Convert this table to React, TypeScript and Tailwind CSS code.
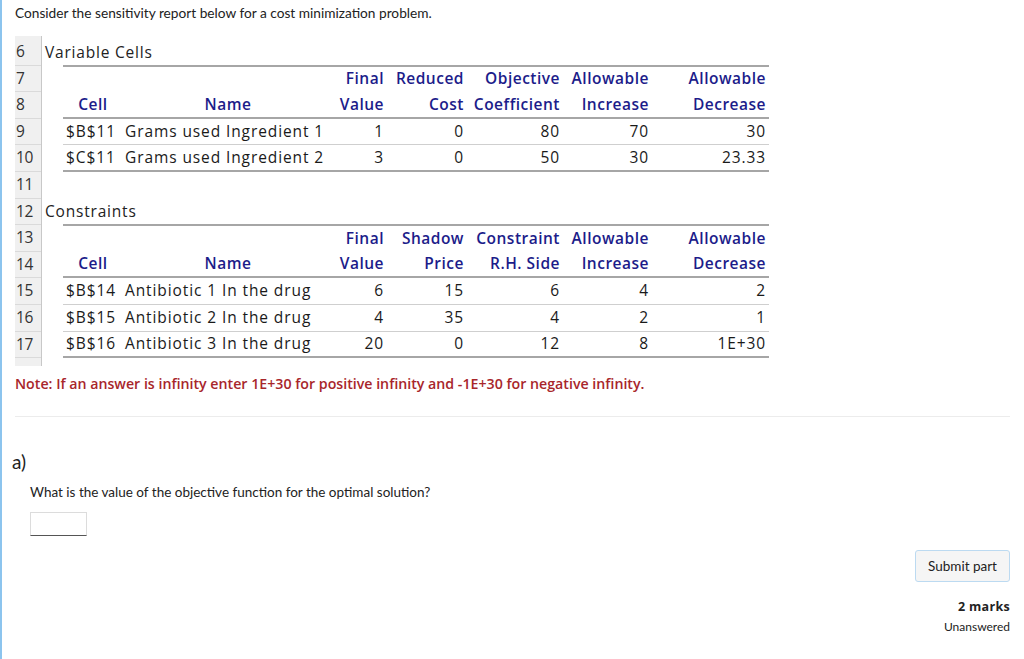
import React from "react";

const XL = { fontFamily: "'Open Sans', Lato, sans-serif" };
const PAGE = { fontFamily: "Lato, 'Noto Sans', sans-serif" };
const OS = { fontFamily: "'Open Sans', sans-serif" };

type Row = { n: string; kind: "title" | "h1" | "h2" | "data" | "blank"; cells?: string[]; title?: string; last?: boolean };

const rows: Row[] = [
  { n: "6", kind: "title", title: "Variable Cells" },
  { n: "7", kind: "h1", cells: ["", "", "Final", "Reduced", "Objective", "Allowable", "Allowable"] },
  { n: "8", kind: "h2", cells: ["Cell", "Name", "Value", "Cost", "Coefficient", "Increase", "Decrease"] },
  { n: "9", kind: "data", cells: ["$B$11", "Grams used Ingredient 1", "1", "0", "80", "70", "30"] },
  { n: "10", kind: "data", last: true, cells: ["$C$11", "Grams used Ingredient 2", "3", "0", "50", "30", "23.33"] },
  { n: "11", kind: "blank" },
  { n: "12", kind: "title", title: "Constraints" },
  { n: "13", kind: "h1", cells: ["", "", "Final", "Shadow", "Constraint", "Allowable", "Allowable"] },
  { n: "14", kind: "h2", cells: ["Cell", "Name", "Value", "Price", "R.H. Side", "Increase", "Decrease"] },
  { n: "15", kind: "data", cells: ["$B$14", "Antibiotic 1 In the drug", "6", "15", "6", "4", "2"] },
  { n: "16", kind: "data", cells: ["$B$15", "Antibiotic 2 In the drug", "4", "35", "4", "2", "1"] },
  { n: "17", kind: "data", last: true, cells: ["$B$16", "Antibiotic 3 In the drug", "20", "0", "12", "8", "1E+30"] },
];

const colW = ["w-[60px]", "w-[210px]", "w-[54px]", "w-[80px]", "w-[96px]", "w-[89px]", "w-[117px]"];

function Cells({ cells, head, h1 }: { cells: string[]; head: boolean; h1?: boolean }) {
  return (
    <>
      {cells.map((c, i) => {
        let align = "justify-end pr-[3px]";
        if (!h1 && i === 0) align = head ? "justify-center" : "justify-start pl-[3px]";
        if (!h1 && i === 1) align = head ? "justify-center" : "justify-start pl-[2px]";
        return (
          <div
            key={i}
            className={`${colW[i]} h-full flex items-center whitespace-nowrap ${align} ${
              head ? "font-semibold text-[#1c1c8a] tracking-[0.5px]" : "text-[#1a1a1a] tracking-[0.9px]"
            }`}
          >
            {c}
          </div>
        );
      })}
    </>
  );
}

function TableRow({ r }: { r: Row }) {
  if (r.kind === "blank") return <div className="h-full" />;
  if (r.kind === "title")
    return <div className="h-full flex items-center pl-[3px] text-[#222] tracking-[0.8px]">{r.title}</div>;
  if (r.kind === "h1")
    return (
      <div className="h-full flex pl-[21px]">
        <div className="flex h-full items-center border-t-2 border-[#a6a6a6] -mt-[1px]">
          <Cells cells={r.cells!} head h1 />
        </div>
      </div>
    );
  const head = r.kind === "h2";
  let border = "";
  if (head) border = "border-b-2 border-[#a6a6a6]";
  else border = r.last ? "border-b-2 border-[#a6a6a6]" : "border-b border-[#cfcfcf]";
  return (
    <div className="h-full flex pl-[21px]">
      <div className={`flex h-full items-center ${border}`}>
        <Cells cells={r.cells!} head={head} />
      </div>
    </div>
  );
}

function Sheet() {
  return (
    <div className="flex text-[15.5px] leading-none" style={XL}>
      <div className="w-[27px] bg-[#f0f0f0] border-r border-[#c8c8c8] flex flex-col pt-[3px] pb-[8px]">
        {rows.map((r) => (
          <div
            key={r.n}
            className="h-[26.6px] border-b border-[#dadada] flex items-center pl-[1px] text-[#333] tracking-[-0.3px]"
          >
            {r.n}
          </div>
        ))}
      </div>
      <div className="flex flex-col pt-[3px]">
        {rows.map((r, idx) => (
          <div key={idx} className="h-[26.6px] w-[727px]">
            <TableRow r={r} />
          </div>
        ))}
      </div>
    </div>
  );
}

export default function App() {
  return (
    <div className="w-[1024px] h-[659px] bg-white flex overflow-hidden" style={PAGE}>
      <div className="w-[2px] bg-[#8cc4ee]" />
      <div className="flex-1 pl-[13px] pr-[14px] flex flex-col">
        <p className="text-[13.7px] text-[#222] mt-[4px] leading-[18px]">
          Consider the sensitivity report below for a cost minimization problem.
        </p>
        <div className="mt-[14px]">
          <Sheet />
        </div>
        <p className="mt-[9px] text-[14.2px] font-semibold text-[#a8262b] leading-[18px]" style={OS}>
          Note: If an answer is infinity enter 1E+30 for positive infinity and -1E+30 for negative infinity.
        </p>
        <div className="mt-[23px] border-t border-[#ececec]" />
        <div className="mt-[33px] text-[19px] text-[#222] leading-[24px] -ml-[3px]">a)</div>
        <p className="mt-[9px] ml-[15px] text-[13.5px] text-[#222] leading-[18px]">
          What is the value of the objective function for the optimal solution?
        </p>
        <div className="mt-[11px] ml-[15px] w-[57px] h-[24px] border border-[#dcdcdc] border-b-[#555]" />
        <div className="flex flex-col items-end">
          <button className="mt-[14px] w-[95px] h-[32px] bg-[#f5f5f5] border border-[#bcdaf1] rounded-[3px] text-[13.5px] text-[#222]">
            Submit part
          </button>
          <div className="mt-[16px] text-[12.5px] font-bold text-[#222] leading-[18px] tracking-[0.3px]" style={OS}>
            2 marks
          </div>
          <div className="mt-[3px] text-[12px] text-[#222] leading-[16px]">Unanswered</div>
        </div>
      </div>
    </div>
  );
}
